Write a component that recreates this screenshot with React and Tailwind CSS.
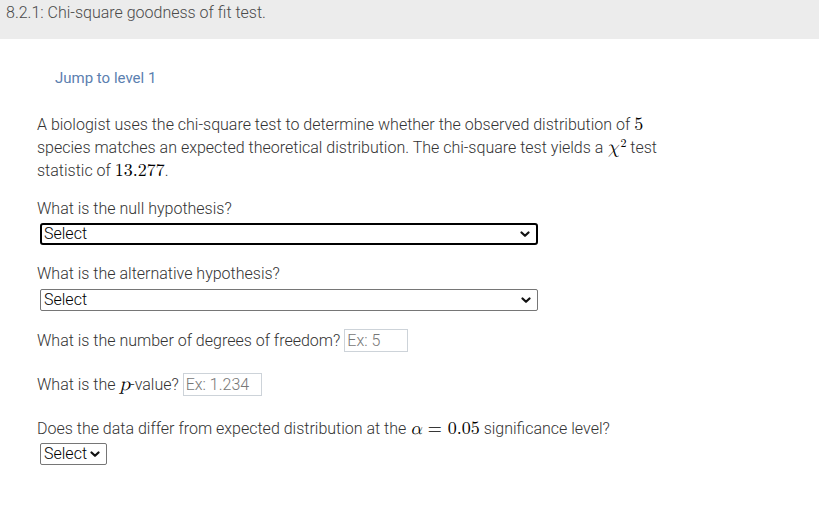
import { useState } from "react";

const math = "font-['Latin_Modern_Math','DejaVu_Serif','Liberation_Serif',serif]";

function Chevron() {
  return (
    <svg width="10" height="7" viewBox="0 0 10 7" className="shrink-0">
      <path d="M1.5 1.5 L5 4.8 L8.5 1.5" fill="none" stroke="#111" strokeWidth="2.2" strokeLinecap="round" strokeLinejoin="round" />
    </svg>
  );
}

function FakeSelect({ focused, className = "" }) {
  return (
    <div
      className={
        "flex h-[22px] items-center justify-between bg-white pr-[6px] text-[16px] font-light text-black " +
        (focused
          ? "rounded-[3px] border-2 border-black pl-[2px]"
          : "rounded-[2px] border border-[#767676] pl-[3px]") +
        " " +
        className
      }
    >
      <span className="leading-none">Select</span>
      <Chevron />
    </div>
  );
}

function TextBox({ placeholder, width }) {
  const [value, setValue] = useState("");
  return (
    <input
      className={`h-[23px] border border-[#cdd3d9] bg-white px-[2px] text-[16px] font-light text-[#333] placeholder:text-[#777] outline-none ${width}`}
      onChange={(event) => setValue(event.target.value)}
      placeholder={placeholder}
      value={value}
    />
  );
}

export default function App() {
  return (
    <div className="min-h-[514px] w-[819px] bg-white font-['Roboto',sans-serif] font-light text-[#333]">
      <div className="h-[39px] bg-[#ececec] pl-[6px] pt-[1px] text-[16px] leading-[24px] text-[#4a4a4a]">
        8.2.1: Chi-square goodness of fit test.
      </div>

      <div className="mt-[29px] pl-[55px] text-[15px] leading-[20px] font-normal text-[#5b80b0]">
        Jump to level 1
      </div>

      <div className="mt-[25px] pl-[37px]">
        <p className="w-[625px] text-[16px] leading-[23px]">
          A biologist uses the chi-square test to determine whether the observed distribution of{" "}
          <span className={`${math} text-[18px] leading-none text-black`}>5</span> species matches an
          expected theoretical distribution. The chi-square test yields a{" "}
          <span className={`${math} text-[19px] leading-none italic text-black`}>
            χ<sup className="ml-[1px] text-[12px] not-italic">2</sup>
          </span>{" "}
          test statistic of{" "}
          <span className={`${math} text-[18px] leading-none text-black`}>13.277</span>.
        </p>

        <div className="mt-[15px] text-[16px] leading-[23px]">What is the null hypothesis?</div>
        <FakeSelect focused className="mt-[3px] ml-[3px] w-[498px]" />

        <div className="mt-[17px] text-[16px] leading-[23px]">What is the alternative hypothesis?</div>
        <FakeSelect className="mt-[4px] ml-[3px] w-[498px]" />

        <div className="mt-[18px] flex items-center gap-[4px] text-[16px] leading-[23px]">
          <span>What is the number of degrees of freedom?</span>
          <TextBox placeholder="Ex: 5" width="w-[64px]" />
        </div>

        <div className="mt-[21px] flex items-center gap-[4px] text-[16px] leading-[23px]">
          <span>
            What is the <span className={`${math} text-[19px] leading-none italic text-black`}>p</span>-value?
          </span>
          <TextBox placeholder="Ex: 1.234" width="w-[79px]" />
        </div>

        <div className="mt-[21px] text-[16px] leading-[23px]">
          Does the data differ from expected distribution at the{" "}
          <span className={`${math} text-[18px] leading-none text-black`}>
            <i>α</i> = 0.05
          </span>{" "}
          significance level?
        </div>
        <FakeSelect className="mt-[3px] ml-[3px] w-[67px] pr-[4px]" />
      </div>
    </div>
  );
}
